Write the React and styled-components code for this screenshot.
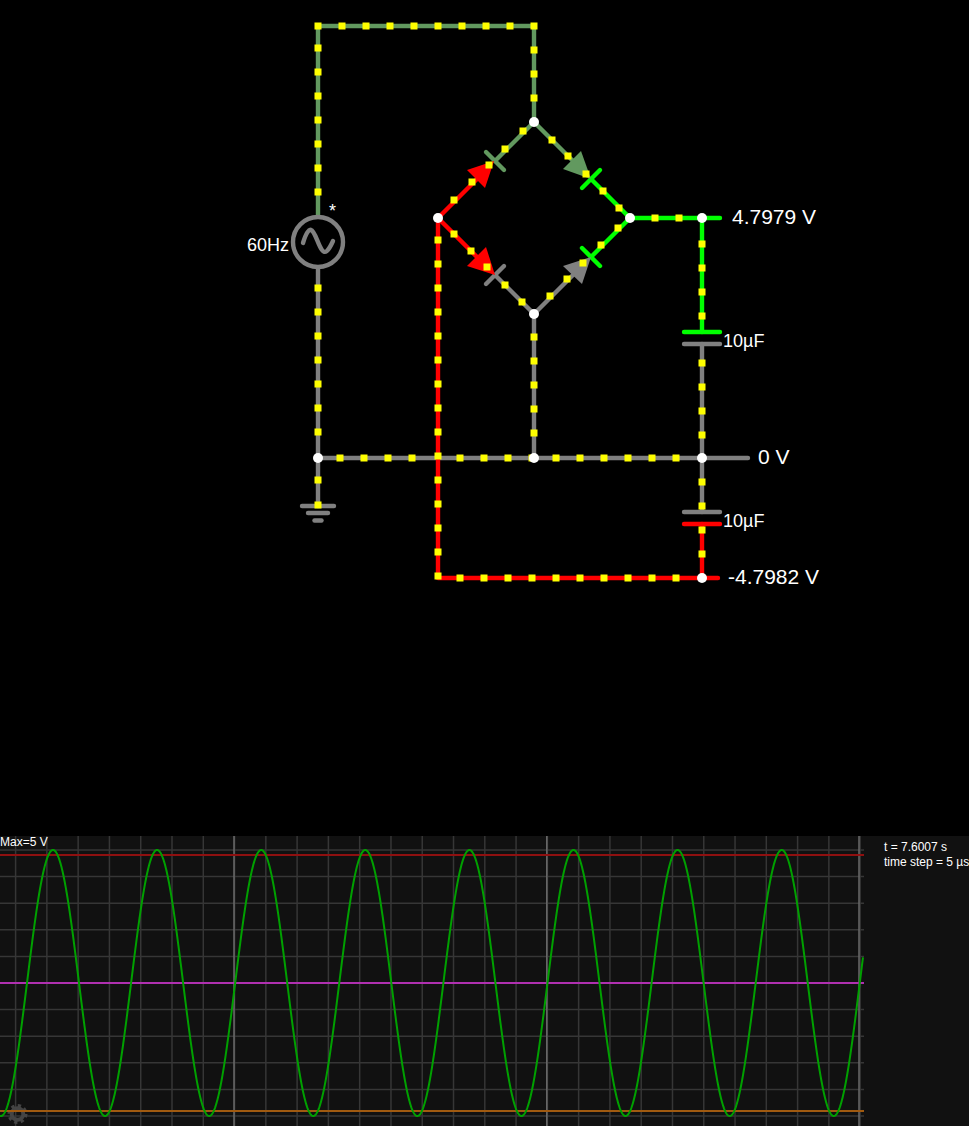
import React from 'react'
import styled, { createGlobalStyle } from 'styled-components'

const GRAY = '#808080'
const GREEN = '#00ff00'
const RED = '#ff0000'
const MID = '#62995f'

const wires = [
  { color: MID, d: 'M318 216V26H534V122' },
  { color: GRAY, d: 'M318 268V506M318 458H748' },
  { color: GRAY, d: 'M534 314V458' },
  { color: GRAY, d: 'M702 344V512' },
  { color: GREEN, d: 'M630 218H720M702 218V332' },
  { color: RED, d: 'M438 218V578M438 578H718M702 524V578' },
  { color: RED, d: 'M438 218L480 176M438 218L480 260' },
  { color: MID, d: 'M534 122L495 161M534 122L575 163' },
  { color: GRAY, d: 'M534 314L495 275M534 314L575 273' },
  { color: GREEN, d: 'M630 218L591 179M630 218L591 257' },
  // diode bars
  { color: MID, d: 'M486 152L504 170' },
  { color: GREEN, d: 'M600 170L582 188' },
  { color: GRAY, d: 'M504 266L486 284' },
  { color: GREEN, d: 'M582 248L600 266' },
  // capacitor plates
  { color: GREEN, d: 'M684 332H720' },
  { color: GRAY, d: 'M684 344H720' },
  { color: GRAY, d: 'M684 512H720' },
  { color: RED, d: 'M684 524H720' },
  // ground
  { color: GRAY, d: 'M302 506H334' },
  { color: GRAY, d: 'M308 513H328' },
  { color: GRAY, d: 'M314.5 520.5H321.5' },
]

const arrows = [
  { color: RED, points: '494,161 467,170 485,188' },
  { color: MID, points: '591,179 581,151 563,169' },
  { color: RED, points: '495,275 486,247 467,266' },
  { color: GRAY, points: '591,257 563,266 582,284' },
]

const nodes = [
  [534, 122], [438, 218], [630, 218], [534, 314], [702, 218],
  [318, 458], [534, 458], [702, 458], [702, 578],
]

const range = (from, to, step) => {
  const out = []
  for (let v = from; v <= to; v += step) out.push(v)
  return out
}

const dots = [
  ...range(318, 534, 24).map((x) => [x, 26]),
  ...range(48, 192, 24).map((y) => [318, y]),
  ...range(288, 432, 24).map((y) => [318, y]),
  [318, 480], [318, 505],
  ...range(50, 98, 24).map((y) => [534, y]),
  [454, 200], [472, 182], [489, 165], [505, 149], [523, 131],
  [552, 140], [568, 156], [586, 174], [603, 191], [619, 208],
  [454, 234], [471, 251], [487, 267], [505, 285], [522, 302],
  [550, 296], [567, 279], [583, 263], [601, 245], [618, 228],
  [655, 218], [679, 218],
  ...range(244, 316, 24).map((y) => [702, y]),
  ...range(363, 435, 24).map((y) => [702, y]),
  [702, 482], [702, 506], [702, 530], [702, 554],
  ...range(340, 412, 24).map((x) => [x, 458]),
  ...range(460, 676, 24).map((x) => [x, 458]),
  ...range(460, 676, 24).map((x) => [x, 578]),
  ...range(240, 576, 24).map((y) => [438, y]),
  ...range(337, 433, 24).map((y) => [534, y]),
]

const labels = [
  { x: 732, y: 224, size: 21, text: '4.7979 V' },
  { x: 758, y: 464, size: 21, text: '0 V' },
  { x: 728, y: 584, size: 21, text: '-4.7982 V' },
  { x: 723, y: 347, size: 18, text: '10µF' },
  { x: 723, y: 527, size: 18, text: '10µF' },
  { x: 247, y: 251, size: 18, text: '60Hz' },
  { x: 329, y: 217, size: 18, text: '*' },
]

const minorX = range(0, 27, 1).map((i) => 15.6 + i * 31.28).filter((x) => x < 864)
const majorX = [234, 546.8, 859]
const gridY = range(0, 10, 1).map((i) => 850 + i * 26.6)

// sine trace sampled every half pixel, stops just short of the plot edge
const trace = range(0, 1726, 1)
  .map((i) => {
    const x = i / 2
    const y = 983 - 133 * Math.cos((2 * Math.PI * (x - 53)) / 104.1)
    return `${i ? 'L' : 'M'}${x} ${y.toFixed(2)}`
  })
  .join('')

const Global = createGlobalStyle`
  html, body {
    margin: 0;
    background: #000;
  }
  body {
    font-family: "Liberation Sans", Arial, sans-serif;
    overflow: hidden;
  }
`

const Page = styled.div`
  width: 969px;
  height: 1126px;
  display: flex;
  flex-direction: column;
  background: #000;
`

const Canvas = styled.svg`
  display: block;
  width: 969px;
  height: 836px;
  flex: none;
`

const Wire = styled.path`
  fill: none;
  stroke: ${(p) => p.$color};
  stroke-width: 4.4;
  stroke-linecap: round;
`

const Arrow = styled.polygon`
  fill: ${(p) => p.$color};
`

const Dot = styled.rect`
  fill: #ffff00;
`

const Node = styled.circle`
  fill: #fff;
`

const SourceRing = styled.circle`
  fill: #000;
  stroke: ${GRAY};
  stroke-width: 4.4;
`

const Label = styled.text`
  fill: #fff;
  font-family: "Liberation Sans", Arial, sans-serif;
  font-size: ${(p) => p.$size}px;
`

const Scope = styled.section`
  position: relative;
  flex: 1;
  display: flex;
  background: #111;
  color: #fff;
  font-size: 12px;
  line-height: 15px;
`

const Plot = styled.svg`
  display: block;
  width: 864px;
  height: 290px;
  flex: none;
`

const GridLine = styled.line`
  stroke: ${(p) => (p.$major ? '#6a6a6a' : '#363636')};
  stroke-width: 1.5;
`

const Level = styled.line`
  stroke: ${(p) => p.$color};
  stroke-width: 2;
`

const Trace = styled.path`
  fill: none;
  stroke: #00a000;
  stroke-width: 2;
`

const GearRing = styled.circle`
  fill: none;
  stroke: #444;
  stroke-width: ${(p) => p.$width};
  stroke-dasharray: ${(p) => p.$dash || 'none'};
`

const MaxLabel = styled.span`
  position: absolute;
  left: 0;
  top: -1px;
`

const Info = styled.div`
  padding: 4px 0 0 20px;
  white-space: nowrap;
`

const App = () => {
  return (
    <Page>
      <Global />
      <Canvas viewBox="0 0 969 836">
        {wires.map((w) => (
          <Wire key={w.d} d={w.d} $color={w.color} />
        ))}
        {arrows.map((a) => (
          <Arrow key={a.points} points={a.points} $color={a.color} />
        ))}
        <SourceRing cx="318" cy="242" r="25" />
        <Wire d="M303 243C306 233 309 229 311 230C315 231 318 245 322 250C325 254 328 252 333 241" $color={GRAY} />
        {dots.map(([x, y]) => (
          <Dot key={`${x}-${y}`} x={x - 3.5} y={y - 3.5} width="7" height="7" />
        ))}
        {nodes.map(([x, y]) => (
          <Node key={`${x}-${y}`} cx={x} cy={y} r="5" />
        ))}
        {labels.map((l) => (
          <Label key={`${l.x}-${l.y}`} x={l.x} y={l.y} $size={l.size}>
            {l.text}
          </Label>
        ))}
      </Canvas>
      <Scope>
        <Plot viewBox="0 836 864 290">
          {gridY.map((y) => (
            <GridLine key={y} x1="0" x2="864" y1={y} y2={y} />
          ))}
          {minorX.map((x) => (
            <GridLine key={x} x1={x} x2={x} y1="836" y2="1126" />
          ))}
          {majorX.map((x) => (
            <GridLine key={x} $major x1={x} x2={x} y1="836" y2="1126" />
          ))}
          <GearRing cx="17.5" cy="1114" r="5.8" $width="4" />
          <GearRing cx="17.5" cy="1114" r="8.3" $width="3.4" $dash="3.2 3.32" />
          <Level x1="0" x2="864" y1="855" y2="855" $color="#8f1010" />
          <Level x1="0" x2="864" y1="983" y2="983" $color="#b030b0" />
          <Level x1="0" x2="864" y1="1111" y2="1111" $color="#a05a10" />
          <Trace d={trace} />
        </Plot>
        <MaxLabel>Max=5 V</MaxLabel>
        <Info>
          t = 7.6007 s
          <br />
          time step = 5 µs
        </Info>
      </Scope>
    </Page>
  )
}

export default App
